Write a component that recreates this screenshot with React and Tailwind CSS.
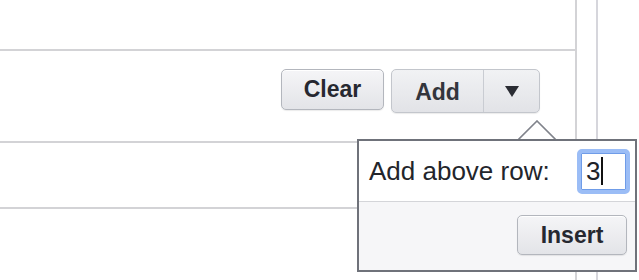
export default function App() {
  const btn =
    "flex items-center justify-center rounded-[5px] border border-[#b3b6bd] bg-gradient-to-b from-[#f5f5f7] to-[#e3e4e8] text-[23px] font-bold text-[#262830] shadow-[inset_0_1px_0_#ffffff,0_1px_1px_rgba(0,0,0,0.08)]";

  return (
    <div
      className="relative h-[280px] w-[639px] overflow-hidden bg-white"
      style={{ fontFamily: '"Liberation Sans", Arial, sans-serif' }}
    >
      <div className="flex h-full">
        <div className="flex h-full w-[577px] flex-col border-r-2 border-[#d3d3d6]">
          <div className="h-[51px] shrink-0 border-b-2 border-[#d3d3d6]" />
          <div className="flex h-[92px] shrink-0 items-start justify-end gap-[7px] border-b-2 border-[#d3d3d6] pr-[35px] pt-[18px]">
            <button className={`${btn} h-[41px] w-[103px]`}>Clear</button>
            <div className="flex h-[44px] w-[149px] overflow-hidden rounded-[5px] border border-[#c3c6cc] bg-gradient-to-b from-[#f1f2f4] to-[#e2e3e7] shadow-[0_1px_1px_rgba(0,0,0,0.08)]">
              <div className="flex w-[92px] items-center justify-center border-r border-[#c9ccd2] pt-[2px] text-[23px] font-bold text-[#33353c]">
                Add
              </div>
              <div className="flex flex-1 items-center justify-center">
                <svg width="14" height="11" viewBox="0 0 14 11">
                  <polygon points="0,0 14,0 7,11" fill="#2a2c33" />
                </svg>
              </div>
            </div>
          </div>
          <div className="h-[66px] shrink-0 border-b-2 border-[#d3d3d6]" />
          <div className="flex-1" />
        </div>
        <div className="w-[19px] shrink-0" />
        <div className="h-full w-[2px] shrink-0 bg-[#d6d6dc]" />
      </div>

      {/* popover */}
      <svg
        className="absolute left-[518px] top-[120px]"
        width="38"
        height="21"
        viewBox="0 0 38 21"
      >
        <polygon points="0,20 19,1 38,20" fill="#ffffff" />
        <polyline
          points="0,20 19,1 38,20"
          fill="none"
          stroke="#80838b"
          strokeWidth="1.6"
        />
      </svg>
      <div className="absolute left-[357px] top-[139px] flex h-[133px] w-[280px] flex-col border-2 border-[#6f727a] bg-white">
        <div className="flex h-[61px] shrink-0 items-center justify-between border-b border-[#d4d5d9] pl-[10px] pr-[5px]">
          <span className="text-[26px] text-[#23252b]">Add above row:</span>
          <div className="flex h-[45px] w-[53px] items-center rounded-[5px] border-[4px] border-[#9bbdf6] bg-white pl-[5px] shadow-[inset_0_0_0_1px_#6f9ce8]">
            <span className="text-[26px] leading-none text-[#202228]">3</span>
            <span className="ml-[1px] h-[28px] w-[2px] bg-[#111111]" />
          </div>
        </div>
        <div className="flex flex-1 items-start justify-end bg-[#f6f6f8] pr-[8px] pt-[13px]">
          <button className={`${btn} h-[40px] w-[110px]`}>Insert</button>
        </div>
      </div>
    </div>
  );
}
